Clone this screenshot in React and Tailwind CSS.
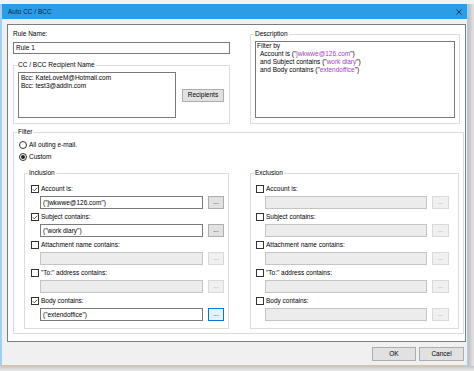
import { Check } from "lucide-react";

const purple = "text-[#a43fbf]";

function Group({ label, className = "", children }) {
  return (
    <fieldset className={`border border-[#dcdcdc] ${className}`}>
      <legend className="ml-[3px] px-[1px] leading-[8px]">{label}</legend>
      {children}
    </fieldset>
  );
}

function CheckBox({ checked }) {
  return (
    <span className="w-[8px] h-[8px] border border-[#333] bg-white flex items-center justify-center shrink-0">
      {checked && <Check size={7} strokeWidth={3} className="text-[#222]" />}
    </span>
  );
}

function Radio({ checked }) {
  return (
    <span className="w-[8px] h-[8px] rounded-full border border-[#333] bg-white flex items-center justify-center shrink-0">
      {checked && <span className="w-[4px] h-[4px] rounded-full bg-[#222]" />}
    </span>
  );
}

function FilterRow({ label, value, checked, inputW, btnW, boxPl, inputPl, focused, first }) {
  return (
    <div className={first ? "" : "mt-[4px]"}>
      <div className="flex items-center gap-[2px] h-[8px]" style={{ paddingLeft: boxPl }}>
        <CheckBox checked={checked} />
        <span>{label}</span>
      </div>
      <div className="flex items-center gap-[5px] mt-[3px] h-[13px]" style={{ paddingLeft: inputPl }}>
        <div
          className={`h-[13px] border pl-[2px] flex items-center ${
            checked ? "border-[#7a7a7a] bg-white" : "border-[#c4c4c4] bg-[#ececec]"
          }`}
          style={{ width: inputW }}
        >
          {value}
        </div>
        <div
          className={`h-[13px] border flex items-center justify-center leading-none ${
            focused
              ? "border-[#0078d7] bg-[#e5f1fb] text-[#222]"
              : checked
              ? "border-[#adadad] bg-[#e1e1e1] text-[#222]"
              : "border-[#d9d9d9] bg-[#f0f0f0] text-[#a0a0a0]"
          }`}
          style={{ width: btnW }}
        >
          ...
        </div>
      </div>
    </div>
  );
}

const rows = [
  { label: "Account is:", value: '("jwkwwe@126.com")' },
  { label: "Subject contains:", value: '("work diary")' },
  { label: "Attachment name contains:", value: "" },
  { label: '"To:" address contains:', value: "" },
  { label: "Body contains:", value: '("extendoffice")' },
];

export default function App() {
  return (
    <div className="w-[474px] h-[371px] overflow-hidden bg-[#dcdcdc] flex flex-col font-['Liberation_Sans',Arial,sans-serif] text-[6.5px] leading-[8px] text-black">
      <div className="h-[4px] bg-[#f2f2f2] shrink-0" />
      <div className="flex shrink-0">
        <div className="w-[468px] border-l-2 border-r border-b border-[#a3cff0] bg-[#f0f0f0]">
          {/* Title bar */}
          <div className="h-[15px] bg-[#2b9de6] flex items-center justify-between pl-[6px] pr-[4px]">
            <span className="text-[#10233d]">Auto CC / BCC</span>
            <svg width="6" height="6" viewBox="0 0 6 6" className="mr-[1px]">
              <path d="M0.5 0.5L5.5 5.5M5.5 0.5L0.5 5.5" stroke="#1b2a40" strokeWidth="0.9" />
            </svg>
          </div>

          <div className="pt-[5px] pl-[5px] pr-[1px]">
            {/* Main panel */}
            <div className="w-[459px] h-[318px] border border-[#7d7d7d] bg-white pt-[5px] pl-[5px]">
              <div className="flex gap-[20px]">
                <div className="w-[217px]">
                  <div className="h-[8px]">Rule Name:</div>
                  <div className="mt-[4px] h-[12px] border border-[#7a7a7a] flex items-center pl-[2px]">
                    Rule 1
                  </div>
                  <Group label="CC / BCC Recipient Name" className="mt-[7px]">
                    <div className="flex items-center pt-[3px] pb-[5px] pl-[4px]">
                      <div className="w-[158px] h-[46px] border border-[#7a7a7a] pl-[2px] pt-[1px] leading-[7.5px]">
                        <div>Bcc: KateLoveM@Hotmail.com</div>
                        <div>Bcc: test3@addin.com</div>
                      </div>
                      <div className="ml-[6px] w-[42px] h-[13px] border border-[#adadad] bg-[#e1e1e1] flex items-center justify-center">
                        Recipients
                      </div>
                    </div>
                  </Group>
                </div>
                <Group label="Description" className="w-[210px]">
                  <div className="pt-[3px] pb-[5px] pl-[4px]">
                    <div className="w-[200px] h-[77px] border border-[#7a7a7a] pl-[1px]">
                      <div>Filter by</div>
                      <div className="pl-[3px]">
                        Account is ("<span className={purple}>jwkwwe@126.com</span>")
                      </div>
                      <div className="pl-[3px]">
                        and Subject contains ("<span className={purple}>work diary</span>")
                      </div>
                      <div className="pl-[3px]">
                        and Body contains ("<span className={purple}>extendoffice</span>")
                      </div>
                    </div>
                  </div>
                </Group>
              </div>

              <Group label="Filter" className="w-[451px] mt-[4px]">
                <div className="pl-[5px] pb-[4px]">
                  <div className="mt-[5px] flex items-center gap-[2px] h-[8px]">
                    <Radio />
                    <span>All outing e-mail.</span>
                  </div>
                  <div className="mt-[4px] flex items-center gap-[2px] h-[8px]">
                    <Radio checked />
                    <span>Custom</span>
                  </div>
                  <div className="flex gap-[21px] mt-[8px] pl-[5px]">
                    <Group label="Inclusion" className="w-[205px]">
                      <div className="pt-[8px] pb-[7px]">
                        {rows.map((r, i) => (
                          <FilterRow
                            key={r.label}
                            first={i === 0}
                            label={r.label}
                            value={r.value}
                            checked={!!r.value}
                            focused={i === 4}
                            inputW={163}
                            btnW={16}
                            boxPl={6}
                            inputPl={15}
                          />
                        ))}
                      </div>
                    </Group>
                    <Group label="Exclusion" className="w-[209px]">
                      <div className="pt-[8px] pb-[7px]">
                        {rows.map((r, i) => (
                          <FilterRow
                            key={r.label}
                            first={i === 0}
                            label={r.label}
                            value=""
                            checked={false}
                            inputW={162}
                            btnW={17}
                            boxPl={5}
                            inputPl={14}
                          />
                        ))}
                      </div>
                    </Group>
                  </div>
                </div>
              </Group>
            </div>

            {/* Buttons */}
            <div className="flex justify-end gap-[3px] pr-[2px] mt-[5px] pb-[4px]">
              <div className="w-[44px] h-[14px] border border-[#adadad] bg-[#e1e1e1] flex items-center justify-center">
                OK
              </div>
              <div className="w-[45px] h-[14px] border border-[#adadad] bg-[#e1e1e1] flex items-center justify-center">
                Cancel
              </div>
            </div>
          </div>
        </div>
        <div className="flex-1 bg-gradient-to-r from-[#bdbdbd] to-[#e6e6e6]" />
      </div>
      <div className="flex-1 bg-gradient-to-b from-[#c4c4c4] to-[#e8e8e8]" />
    </div>
  );
}
